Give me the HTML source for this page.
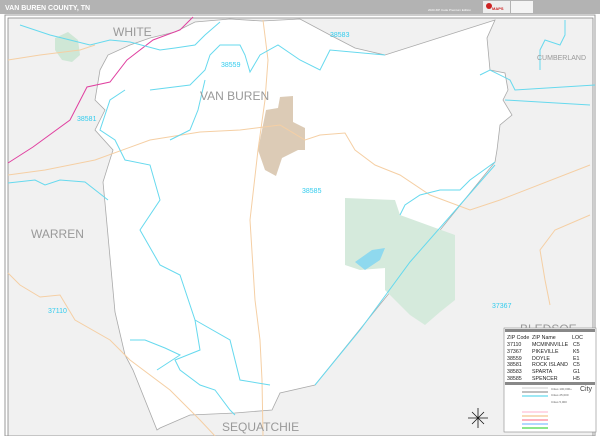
<!DOCTYPE html>
<html><head><meta charset="utf-8"><style>
html,body{margin:0;padding:0;width:600px;height:436px;overflow:hidden;background:#fff;font-family:"Liberation Sans",sans-serif}
</style></head><body>
<svg width="600" height="436" viewBox="0 0 600 436" xmlns="http://www.w3.org/2000/svg" font-family="Liberation Sans, sans-serif">
<rect x="0" y="0" width="600" height="14" fill="#b3b3b3"/>
<text x="5" y="10" font-size="7" font-weight="bold" fill="#fff">VAN BUREN COUNTY, TN</text>
<text x="428" y="11" font-size="3" fill="#fff">2020 ZIP Code Premium Edition</text>
<rect x="483" y="1" width="27" height="12" fill="#eee"/>
<circle cx="489" cy="6" r="3" fill="#c22"/>
<text x="492" y="10" font-size="4" font-weight="bold" fill="#c22">MAPS</text>
<rect x="511" y="1" width="22" height="12" fill="#f4f4f4"/>
<rect x="5" y="15" width="590" height="421" fill="#fff" stroke="#999" stroke-width="1"/>
<rect x="8" y="18" width="585" height="418" fill="#f1f1f1" stroke="#888" stroke-width="0.8"/>
<path d="M100,70 L108,55 L130,45 L150,38 L175,32 L195,22 L230,19 L262,21 L300,19 L330,35 L355,48 L385,55 L495,20 L487,38 L490,70 L505,73 L508,90 L503,100 L512,115 L500,125 L497,150 L495,162 L315,385 L280,393 L272,410 L235,413 L190,415 L160,428 L157,430 L133,370 L125,355 L115,312 L105,203 L103,182 L113,150 L95,130 L105,110 L95,100 Z" fill="#fff" stroke="#aaa" stroke-width="0.8"/>
<path d="M345,198 L395,200 L400,215 L455,235 L455,300 L440,312 L425,325 L410,315 L395,300 L385,290 L385,268 L360,270 L345,265 Z" fill="#d5eadc"/>
<path d="M55,38 L68,32 L78,40 L80,55 L72,62 L62,60 L55,50 Z" fill="#cfe7d6"/>
<path d="M293,96 L293,122 L305,128 L305,150 L298,150 L282,158 L276,176 L265,170 L258,150 L262,130 L266,110 L278,108 L280,97 Z" fill="#dccbb6"/>
<path d="M355,262 L372,250 L385,248 L380,260 L365,270 Z" fill="#8fd9ee"/>
<g fill="none" stroke="#f5cfa4" stroke-width="1">
<path d="M263,20 L268,60 L265,100 L258,150 L250,220 L255,300 L260,340 L262,380 L263,436"/>
<path d="M8,175 L45,170 L95,160 L150,140 L200,132 L240,130 L280,125 L305,140 L320,135 L345,133 L355,150 L375,165 L400,175 L430,195 L470,210 L500,200 L590,165"/>
<path d="M8,273 L20,285 L40,297 L60,295 L75,320 L110,340 L130,360 L170,390 L200,420 L215,436"/>
<path d="M8,60 L40,55 L80,50 L95,45"/>
<path d="M550,305 L545,280 L540,250 L555,230 L590,215"/>
</g>
<path d="M193,17 L180,30 L153,40 L127,60 L110,82 L87,87 L70,120 L33,147 L8,163" fill="none" stroke="#e040a0" stroke-width="1"/>
<path d="M585,430 L592,420" fill="none" stroke="#e040a0" stroke-width="1"/>
<g fill="none" stroke="#66d9ee" stroke-width="1">
<path d="M20,25 L50,35 L70,40 L90,45 L110,40 L130,42 L160,50 L175,48 L195,45 L205,35 L220,22"/>
<path d="M8,183 L35,180 L45,185 L60,180 L85,182 L108,200"/>
<path d="M125,90 L110,100 L100,130 L115,140 L125,160 L150,165 L160,200 L140,230 L160,265 L180,275 L195,320 L200,350 L175,360 L180,370 L200,385 L215,390 L230,410 L235,415"/>
<path d="M130,340 L145,340 L165,348 L180,355 L157,370"/>
<path d="M150,90 L190,85 L205,70 L210,55 L220,45 L240,45 L245,55 L250,72 L260,55 L278,45 L300,60 L320,70 L330,50 L385,55"/>
<path d="M205,80 L198,110 L190,130 L170,140"/>
<path d="M495,162 L470,180 L460,190 L440,190 L420,195 L405,205 L400,215"/>
<path d="M270,385 L240,380 L230,340 L195,320"/>
<path d="M315,385 L360,330 L410,262 L495,165"/>
<path d="M480,75 L490,70 L510,80 L515,90 L595,85"/>
<path d="M505,100 L590,105"/>
<path d="M565,20 L565,35 L560,45 L545,40 L540,50 L540,70"/>
</g>
<g fill="#999" font-size="12">
<text x="113" y="36">WHITE</text>
<text x="200" y="100">VAN BUREN</text>
<text x="31" y="238">WARREN</text>
<text x="222" y="431">SEQUATCHIE</text>
<text x="520" y="333">BLEDSOE</text>
</g>
<text x="537" y="60" font-size="7" fill="#999">CUMBERLAND</text>
<g fill="#33ccee" font-size="7">
<text x="330" y="37">38583</text>
<text x="221" y="67">38559</text>
<text x="77" y="121">38581</text>
<text x="302" y="193">38585</text>
<text x="48" y="313">37110</text>
<text x="492" y="308">37367</text>
</g>
<rect x="504" y="328" width="92" height="104" fill="#fff" stroke="#888" stroke-width="0.6"/>
<rect x="505" y="329" width="90" height="3" fill="#888"/>
<g font-size="5.3" fill="#222">
<text x="507" y="339">ZIP Code</text><text x="532" y="339">ZIP Name</text><text x="572" y="339">LOC</text>
<text x="507" y="346">37110</text><text x="532" y="346">MCMINNVILLE</text><text x="573" y="346">C5</text>
<text x="507" y="353">37367</text><text x="532" y="353">PIKEVILLE</text><text x="573" y="353">K5</text>
<text x="507" y="360">38559</text><text x="532" y="360">DOYLE</text><text x="573" y="360">E1</text>
<text x="507" y="366">38581</text><text x="532" y="366">ROCK ISLAND</text><text x="573" y="366">C5</text>
<text x="507" y="373">38583</text><text x="532" y="373">SPARTA</text><text x="573" y="373">G1</text>
<text x="507" y="380">38585</text><text x="532" y="380">SPENCER</text><text x="573" y="380">H5</text>
</g>
<rect x="505" y="382" width="90" height="3" fill="#888"/>
<g stroke-width="1.5">
<line x1="522" y1="388" x2="548" y2="388" stroke="#ddd"/>
<line x1="522" y1="392" x2="548" y2="392" stroke="#aaa"/>
<line x1="522" y1="396" x2="548" y2="396" stroke="#7ee0f0"/>
<line x1="522" y1="412" x2="548" y2="412" stroke="#fcd"/>
<line x1="522" y1="416" x2="548" y2="416" stroke="#f5cfa4"/>
<line x1="522" y1="420" x2="548" y2="420" stroke="#f9a"/>
<line x1="522" y1="424" x2="548" y2="424" stroke="#9cf"/>
<line x1="522" y1="428" x2="548" y2="428" stroke="#6d6"/>
</g>
<text x="580" y="391" font-size="7" fill="#444">City</text>
<g font-size="3" fill="#666"><text x="551" y="390">Cities 100,000+</text><text x="551" y="396">Cities 25,000</text><text x="551" y="403">Cities 5,000</text></g>
<g stroke="#111" stroke-width="0.8"><line x1="478" y1="408" x2="478" y2="428"/><line x1="468" y1="418" x2="488" y2="418"/><line x1="472" y1="412" x2="484" y2="424"/><line x1="484" y1="412" x2="472" y2="424"/></g>
</svg>
</body></html>
